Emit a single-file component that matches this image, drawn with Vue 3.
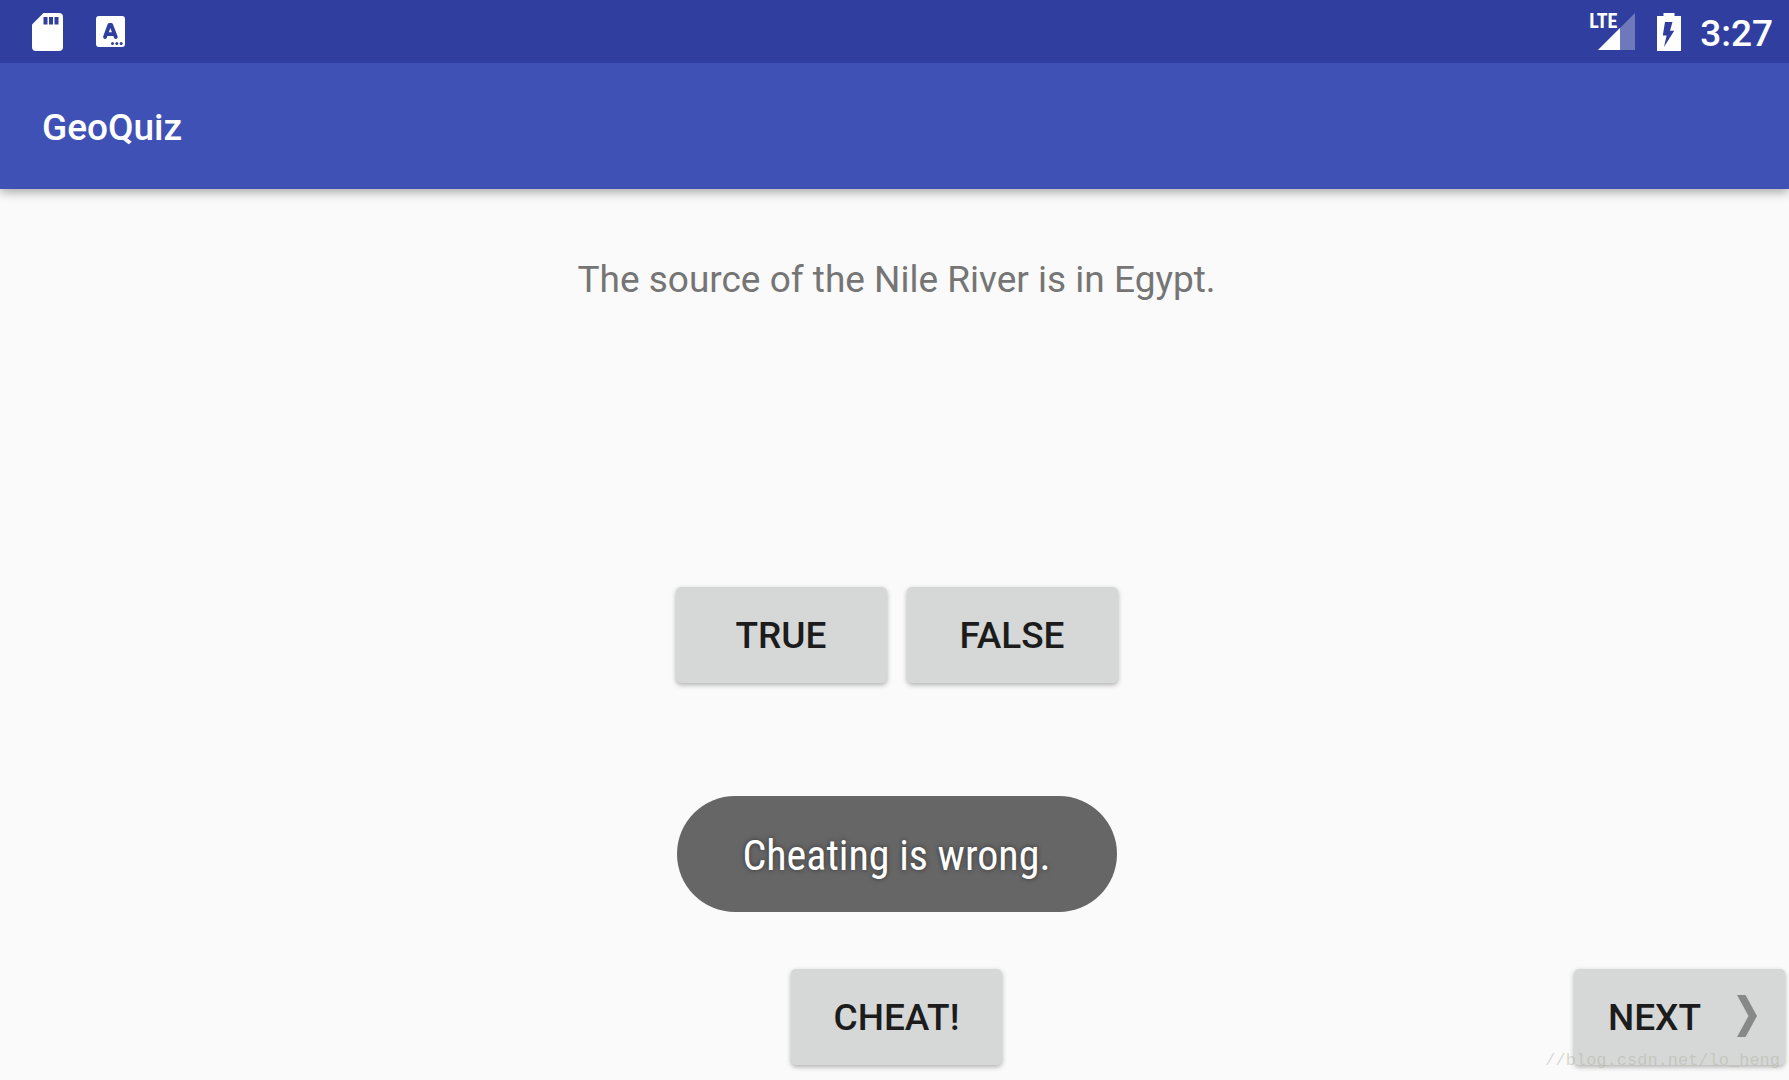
<template>
  <div class="screen">
    <header>
      <div class="status-bar">
        <div class="status-group">
          <svg class="icon-sd" viewBox="0 0 31 38" role="img" aria-label="SD card">
            <path fill="#fff" d="M11.500 0H27a4 4 0 0 1 4 4v30a4 4 0 0 1-4 4H4a4 4 0 0 1-4-4V11.500z" />
            <path fill="#303f9f" d="M11.500 4h4v7.500h-4zM17 4h4v7.500h-4zM22.500 4h4v7.500h-4z" />
          </svg>
          <svg class="icon-ime" viewBox="0 0 29 31" role="img" aria-label="Input method">
            <rect width="29" height="31" rx="3" fill="#fff" />
            <path d="M9 21 13.400 9h1.800L19.800 21M11 18.200h7" fill="none" stroke="#303f9f" stroke-width="3.800" stroke-linecap="round" stroke-linejoin="round" />
            <circle cx="16.500" cy="27.500" r="1.500" fill="#303f9f" />
            <circle cx="20.800" cy="27.500" r="1.500" fill="#303f9f" />
            <circle cx="25.200" cy="27.500" r="1.500" fill="#303f9f" />
          </svg>
        </div>
        <div class="status-group">
          <div class="signal">
            <span class="network">LTE</span>
            <svg class="icon-signal" viewBox="0 0 37 37" aria-hidden="true">
              <path fill="#fff" fill-opacity="0.3" d="M37 0v37H0z" />
              <path fill="#fff" d="M22 15v22H0z" />
            </svg>
          </div>
          <svg class="icon-battery" viewBox="0 0 24 38" role="img" aria-label="Battery charging">
            <path fill="#fff" d="M6.500 0h11v3H24v35H0V3h6.500z" />
            <path fill="#303f9f" d="M8 9h7.500l-2.500 8.700h4.200L7 34l2.600-11.500H5.800z" />
          </svg>
          <time class="clock">{{ hora }}</time>
        </div>
      </div>
      <div class="app-bar">
        <h1>GeoQuiz</h1>
      </div>
    </header>

    <main class="quiz">
      <p class="question">{{ questions[current].text }}</p>

      <div class="answers">
        <button type="button" @click="checkAnswer(true)">TRUE</button>
        <button type="button" @click="checkAnswer(false)">FALSE</button>
      </div>

      <div class="actions">
        <button class="cheat" type="button" @click="cheat">CHEAT!</button>
        <button class="next" type="button" @click="nextQuestion">
          NEXT
          <svg class="icon-next" viewBox="0 0 20 42" aria-hidden="true">
            <path fill="#888" d="M0 0h8.500L20 21 8.500 42H0l11.500-21z" />
          </svg>
        </button>
      </div>

      <div v-if="message" class="toast-layer">
        <div class="toast" role="status">{{ message }}</div>
      </div>
    </main>

    <span class="watermark">//blog.csdn.net/lo_heng</span>
  </div>
</template>

<script setup>
import { ref } from 'vue'

const hora = '3:27'

const questions = [
  { text: 'The source of the Nile River is in Egypt.', answer: false }
]

const current = ref(0)
const cheated = ref(true)
const message = ref('Cheating is wrong.')

function checkAnswer(answer) {
  if (cheated.value) {
    message.value = 'Cheating is wrong.'
    return
  }
  message.value = answer === questions[current.value].answer ? 'Correct!' : 'Incorrect!'
}

function cheat() {
  cheated.value = true
}

function nextQuestion() {
  current.value = (current.value + 1) % questions.length
  cheated.value = false
  message.value = ''
}
</script>

<style>
body {
  margin: 0;
  background: #fafafa;
}
</style>

<style scoped>
.screen {
  position: relative;
  display: flex;
  flex-direction: column;
  min-height: 100vh;
  overflow: hidden;
  background: #fafafa;
  font-family: Roboto, "Liberation Sans", sans-serif;
}

header {
  position: relative;
  color: #fff;
  box-shadow: 0 3px 10px rgba(0, 0, 0, 0.35);
}

.status-bar {
  display: flex;
  justify-content: space-between;
  align-items: center;
  height: 63px;
  padding: 0 16px 0 32px;
  box-sizing: border-box;
  background: #303f9f;
}

.status-group {
  display: flex;
  align-items: center;
}

.icon-sd {
  width: 31px;
  height: 38px;
  margin-right: 33px;
}

.icon-ime {
  width: 29px;
  height: 31px;
}

.signal {
  position: relative;
  display: flex;
  justify-content: flex-end;
  width: 45px;
  margin-right: 22px;
}

/* Network label sits over the corner of the signal triangle */
.network {
  position: absolute;
  top: -2px;
  left: -1px;
  font-family: "Roboto Condensed", Roboto, sans-serif;
  font-size: 20px;
  font-weight: 700;
  line-height: 20px;
}

.icon-signal {
  width: 37px;
  height: 37px;
}

.icon-battery {
  width: 24px;
  height: 38px;
  margin-right: 19px;
}

.clock {
  padding-top: 4px;
  font-size: 37px;
  font-weight: 500;
  line-height: 44px;
}

.app-bar {
  display: flex;
  align-items: center;
  height: 126px;
  padding: 4px 42px 0;
  box-sizing: border-box;
  background: #3f51b5;
}

h1 {
  margin: 0;
  font-size: 37px;
  font-weight: 500;
  line-height: 44px;
}

.quiz {
  position: relative;
  flex: 1;
  display: grid;
  grid-template-rows: 1fr auto 1fr;
  padding: 0 4px 0 8px;
}

.question {
  margin: 0;
  padding: 69px 0;
  color: #757575;
  font-size: 37px;
  line-height: 44px;
  text-align: center;
}

.answers {
  display: flex;
  justify-content: center;
  gap: 20px;
}

.actions {
  display: grid;
  grid-template-columns: 1fr auto 1fr;
  align-items: end;
  padding-bottom: 15px;
}

.cheat {
  grid-column: 2;
}

.next {
  justify-self: end;
  justify-content: flex-end;
}

button {
  display: flex;
  align-items: center;
  justify-content: center;
  min-width: 211px;
  height: 96px;
  padding: 2px 28px 0;
  border: none;
  border-radius: 5px;
  background: #d6d8d7;
  box-shadow: 0 2px 5px rgba(0, 0, 0, 0.3);
  color: #1c1c1c;
  font-family: inherit;
  font-size: 37px;
  font-weight: 500;
  line-height: 44px;
  cursor: pointer;
}

button:active {
  background: #c4c6c5;
}

.icon-next {
  width: 20px;
  height: 42px;
  margin: 0 0 4px 36px;
}

.toast-layer {
  position: absolute;
  right: 4px;
  bottom: 168px;
  left: 8px;
  display: flex;
  justify-content: center;
  pointer-events: none;
}

.toast {
  padding: 36px 66px 32px;
  border-radius: 58px;
  background: #666;
  color: #fff;
  font-family: "Roboto Condensed", Roboto, sans-serif;
  font-size: 42px;
  line-height: 48px;
  text-shadow: 0 0 5px rgba(0, 0, 0, 0.5);
}

.watermark {
  position: absolute;
  right: 9px;
  bottom: 7px;
  color: rgba(175, 175, 155, 0.45);
  font-family: "Liberation Mono", monospace;
  font-size: 17px;
  line-height: 24px;
  pointer-events: none;
}
</style>
